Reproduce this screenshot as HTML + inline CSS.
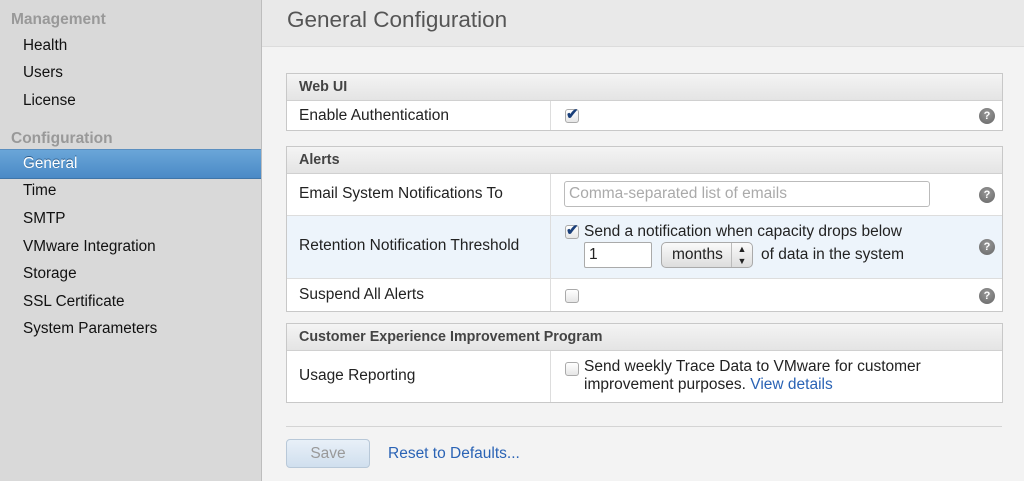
<!DOCTYPE html>
<html><head><style>
body{margin:0;width:1024px;height:481px;overflow:hidden;font-family:"Liberation Sans",sans-serif;background:#f3f3f3;position:relative;font-size:15.5px;color:#222}
.side{position:absolute;left:0;top:0;width:261px;height:481px;background:#d9d9d9;border-right:1px solid #bdbdbd;font-size:15.3px}
.sh{position:absolute;left:11px;font-weight:bold;color:#999;font-size:15.5px}
.si{position:absolute;left:23px;color:#111}
.sel{position:absolute;left:0;top:149px;width:261px;height:28px;background:linear-gradient(#6aa6d8,#4a8ac6);border-top:1px solid #5b8fc0;border-bottom:1px solid #3f75a8}
.sel span{position:absolute;left:23px;top:5px;color:#fff;text-shadow:0 -1px 0 #2d5f8f}
.hdr{position:absolute;left:262px;top:0;right:0;height:46px;background:#e9e9e9;border-bottom:1px solid #dcdcdc}
.hdr h1{margin:0;position:absolute;left:25px;top:7px;font-weight:normal;font-size:22.5px;color:#555}
.tbl{position:absolute;left:286px;width:715px;border:1px solid #c8c8c8;background:#fff}
.th{height:26px;background:linear-gradient(#f4f4f4,#e4e4e4);border-bottom:1px solid #d0d0d0;font-weight:bold;font-size:14.3px;color:#444;line-height:26px;padding-left:12px}
.row{position:relative;border-bottom:1px solid #ddd}
.row:last-child{border-bottom:none}
.lab{position:absolute;left:12px}
.div{position:absolute;left:263px;top:0;bottom:0;border-left:1px solid #ddd}
.q{position:absolute;right:7px;width:16px;height:16px;border-radius:50%;background:radial-gradient(circle at 50% 35%,#999,#666);color:#fff;font-size:11px;font-weight:bold;text-align:center;line-height:16px}
.cb{position:absolute;width:12px;height:12px;border:1px solid #aaa;border-radius:3px;background:linear-gradient(#fff,#e6e6e6)}
.chk{position:absolute;color:#1a3f7a;font-size:15px;font-weight:bold}
a{color:#2a63b5;text-decoration:none}
</style></head><body>
<div class="side">
<div class="sh" style="top:11px">Management</div>
<div class="si" style="top:37px">Health</div>
<div class="si" style="top:64px">Users</div>
<div class="si" style="top:92px">License</div>
<div class="sh" style="top:130px">Configuration</div>
<div class="sel"><span>General</span></div>
<div class="si" style="top:182px">Time</div>
<div class="si" style="top:210px">SMTP</div>
<div class="si" style="top:238px">VMware Integration</div>
<div class="si" style="top:265px">Storage</div>
<div class="si" style="top:293px">SSL Certificate</div>
<div class="si" style="top:320px">System Parameters</div>
</div>
<div class="hdr"><h1>General Configuration</h1></div>

<div class="tbl" style="top:73px">
<div class="th">Web UI</div>
<div class="row" style="height:29px"><span class="lab" style="top:6px">Enable Authentication</span><div class="div"></div>
<div class="cb" style="left:278px;top:8px"></div><span class="chk" style="left:279px;top:4px">✔</span><div class="q" style="top:7px">?</div></div>
</div>

<div class="tbl" style="top:146px">
<div class="th">Alerts</div>
<div class="row" style="height:41px"><span class="lab" style="top:11px">Email System Notifications To</span><div class="div"></div>
<div style="position:absolute;left:277px;top:7px;width:366px;border:1px solid #bbb;border-radius:3px;color:#aaa;line-height:24px;padding-left:4px;box-sizing:border-box;height:26px">Comma-separated list of emails</div><div class="q" style="top:13px">?</div></div>
<div class="row" style="height:62px;background:#edf4fb"><span class="lab" style="top:21px">Retention Notification Threshold</span><div class="div"></div>
<div class="cb" style="left:278px;top:9px"></div><span class="chk" style="left:279px;top:5px">✔</span>
<span style="position:absolute;left:297px;top:7px">Send a notification when capacity drops below</span>
<div style="position:absolute;left:297px;top:26px;width:68px;height:26px;border:1px solid #aaa;border-radius:2px;background:#fff;box-sizing:border-box;line-height:24px;padding-left:4px">1</div>
<div style="position:absolute;left:374px;top:26px;width:92px;height:26px;border:1px solid #aaa;border-radius:5px;background:linear-gradient(#fafafa,#ddd);box-sizing:border-box;line-height:24px;padding-left:10px">months<span style="position:absolute;right:0;top:0;width:20px;border-left:1px solid #bbb;height:24px;font-size:9px;text-align:center;line-height:12px">▲<br>▼</span></div>
<span style="position:absolute;left:474px;top:30px">of data in the system</span><div class="q" style="top:23px">?</div></div>
<div class="row" style="height:32px"><span class="lab" style="top:7px">Suspend All Alerts</span><div class="div"></div>
<div class="cb" style="left:278px;top:10px"></div><div class="q" style="top:9px">?</div></div>
</div>

<div class="tbl" style="top:323px">
<div class="th">Customer Experience Improvement Program</div>
<div class="row" style="height:51px"><span class="lab" style="top:16px">Usage Reporting</span><div class="div"></div>
<div class="cb" style="left:278px;top:11px"></div>
<span style="position:absolute;left:297px;top:7px;line-height:18px">Send weekly Trace Data to VMware for customer<br>improvement purposes. <a>View details</a></span></div>
</div>

<div style="position:absolute;left:286px;top:426px;width:716px;border-top:1px solid #d4d4d4"></div>
<div style="position:absolute;left:286px;top:439px;width:84px;height:29px;border:1px solid #b8c8d8;border-radius:4px;background:linear-gradient(#e8f0f8,#d0dfee);box-sizing:border-box;text-align:center;line-height:28px;color:#999">Save</div>
<a style="position:absolute;left:388px;top:445px">Reset to Defaults...</a>
</body></html>
